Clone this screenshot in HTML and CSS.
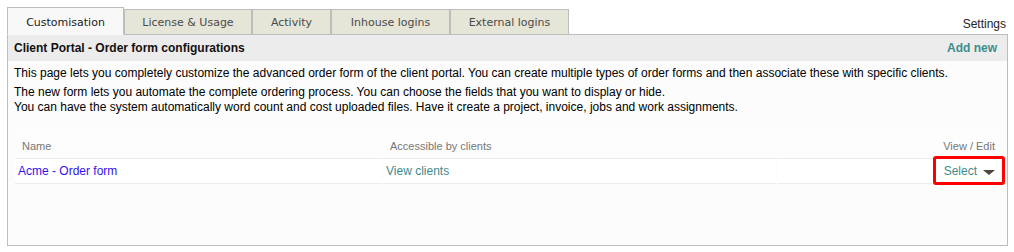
FILE: index.html
```html
<!DOCTYPE html>
<html lang="en">
<head>
<meta charset="utf-8">
<title>Client Portal - Order form configurations</title>
<link rel="stylesheet" href="styles.css">
</head>
<body>
<div class="page">
  <div class="topbar">
    <div class="tabs">
      <div class="tab tab-active tab-w1">Customisation</div>
      <div class="tab tab-w2">License &amp; Usage</div>
      <div class="tab tab-w3">Activity</div>
      <div class="tab tab-w4">Inhouse logins</div>
      <div class="tab tab-w5">External logins</div>
    </div>
    <div class="settings">Settings</div>
  </div>
  <div class="panel">
    <div class="panel-head">
      <span class="panel-title">Client Portal - Order form configurations</span>
      <a class="add-new" href="#">Add new</a>
    </div>
    <div class="panel-body">
      <p class="intro">This page lets you completely customize the advanced order form of the client portal. You can create multiple types of order forms and then associate these with specific clients.</p>
      <p class="intro">The new form lets you automate the complete ordering process. You can choose the fields that you want to display or hide.<br>You can have the system automatically word count and cost uploaded files. Have it create a project, invoice, jobs and work assignments.</p>
      <table class="forms">
        <thead>
          <tr>
            <th class="col-name">Name</th>
            <th class="col-access">Accessible by clients</th>
            <th class="col-edit">View / Edit</th>
          </tr>
        </thead>
        <tbody>
          <tr>
            <td class="col-name"><a class="form-link" href="#">Acme - Order form</a></td>
            <td class="col-access"><a class="teal-link" href="#">View clients</a></td>
            <td class="col-edit">
              <span class="select">Select<span class="caret"></span></span>
              <span class="highlight"></span>
            </td>
          </tr>
        </tbody>
      </table>
    </div>
  </div>
</div>
</body>
</html>
```

FILE: styles.css
```css
* { box-sizing: border-box; }

html, body {
  margin: 0;
  padding: 0;
  background: #ffffff;
}

body {
  font-family: "Liberation Sans", Arial, sans-serif;
  font-size: 12px;
  color: #000;
}

.page {
  padding: 7px 6px 0 7px;
  width: 1014px;
}

.topbar {
  display: flex;
  justify-content: space-between;
  align-items: flex-end;
  position: relative;
  z-index: 1;
  margin-bottom: -1px;
}

.tabs {
  display: flex;
  align-items: flex-end;
}

.tab {
  height: 26px;
  border: 1px solid #bdbdbd;
  background: #e6e6d8;
  font-family: "DejaVu Sans", Verdana, sans-serif;
  font-size: 11px;
  color: #4a4a4a;
  display: flex;
  align-items: center;
  justify-content: center;
  padding-top: 1px;
}

.tab-active {
  height: 28px;
  background: #f8f8f8;
  border-bottom-color: #f8f8f8;
  color: #1a1a1a;
  padding-top: 2px;
}

.tab-w1 { width: 117px; }
.tab-w2 { width: 128px; }
.tab-w3 { width: 79px; }
.tab-w4 { width: 119px; }
.tab-w5 { width: 119px; }

.settings {
  color: #222;
  line-height: 14px;
  margin: 0 2px 4px 0;
}

.panel {
  border: 1px solid #bdbdbd;
  background: #fcfcfc;
}

.panel-head {
  height: 26px;
  background: #ececec;
  display: flex;
  align-items: center;
  justify-content: space-between;
  padding: 0 10px 0 6px;
}

.panel-title {
  font-weight: bold;
  color: #111;
}

.add-new {
  font-weight: bold;
  color: #3d8c8c;
  text-decoration: none;
}

.panel-body {
  min-height: 184px;
  padding: 5px 5px 20px 6px;
}

.intro {
  margin: 0 0 4px;
  line-height: 15px;
}

.forms {
  margin-top: 18px;
  width: 987px;
  border-collapse: separate;
  border-spacing: 1px 0;
  margin-left: 0;
}

.forms th {
  font-weight: normal;
  font-size: 11px;
  color: #777;
  height: 26px;
  text-align: left;
  border-bottom: 1px solid #ececec;
  background: #fdfdfd;
  padding: 0 0 0 7px;
  vertical-align: middle;
}

.forms td {
  height: 25px;
  border-bottom: 1px solid #ececec;
  background: #ffffff;
  padding: 0 0 0 3px;
  vertical-align: middle;
}

.forms th.col-edit,
.forms td.col-edit {
  text-align: right;
  padding: 0 5px 0 0;
}

.col-name { width: 367px; }
.col-edit { width: 223px; position: relative; }

.form-link {
  color: #3311ee;
  text-decoration: none;
}

.teal-link {
  color: #3f8c8c;
  text-decoration: none;
}

.select {
  color: #3f8c8c;
  display: inline-flex;
  align-items: center;
}

.caret {
  display: inline-block;
  width: 0;
  height: 0;
  margin: 3px 0 0 6px;
  border-left: 6px solid transparent;
  border-right: 6px solid transparent;
  border-top: 5px solid #4d4740;
}

.highlight {
  position: absolute;
  top: -3px;
  right: -5px;
  width: 72px;
  height: 29px;
  border: 3px solid #ff0000;
  border-radius: 3px;
  pointer-events: none;
}
```
